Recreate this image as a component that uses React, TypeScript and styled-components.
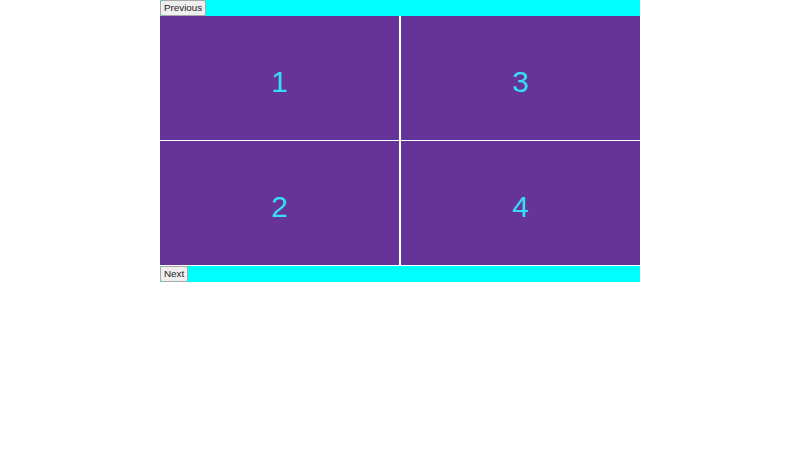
import React from "react";
import styled, { createGlobalStyle } from "styled-components";

const Global = createGlobalStyle`
  html, body { margin: 0; padding: 0; background: #ffffff; }
  body { font-family: "Liberation Sans", Arial, sans-serif; }
`;

const Wrapper = styled.div`
  width: 480px;
  margin: 0 auto;
  display: flex;
  flex-direction: column;
`;

const Bar = styled.div`
  background: #00ffff;
  height: 16px;
  display: flex;
  align-items: stretch;
`;

const NavButton = styled.button`
  font-family: "Liberation Sans", Arial, sans-serif;
  font-size: 9.8px;
  line-height: 12px;
  padding: 1px 3px;
  margin: 0;
  color: #222;
  background: #efefef;
  border: 1px solid #a8a8a8;
  border-radius: 2px;
  height: 16px;
  box-sizing: border-box;
`;

const Grid = styled.div`
  display: grid;
  grid-template-columns: 1fr 1fr;
  grid-template-rows: 124px 124px;
  grid-auto-flow: column;
  gap: 1px 2px;
  height: 250px;
  background: #ffffff;
`;

const Cell = styled.div`
  background: #663399;
  color: #38dcf2;
  display: flex;
  align-items: center;
  justify-content: center;
  padding-top: 7px;
  box-sizing: border-box;
  font-family: "Liberation Sans", Arial, sans-serif;
  font-size: 30px;
`;

export default function App() {
  return (
    <>
      <Global />
      <Wrapper>
        <Bar>
          <NavButton>Previous</NavButton>
        </Bar>
        <Grid>
          {[1, 2, 3, 4].map((n) => (
            <Cell key={n}>{n}</Cell>
          ))}
        </Grid>
        <Bar>
          <NavButton>Next</NavButton>
        </Bar>
      </Wrapper>
    </>
  );
}
